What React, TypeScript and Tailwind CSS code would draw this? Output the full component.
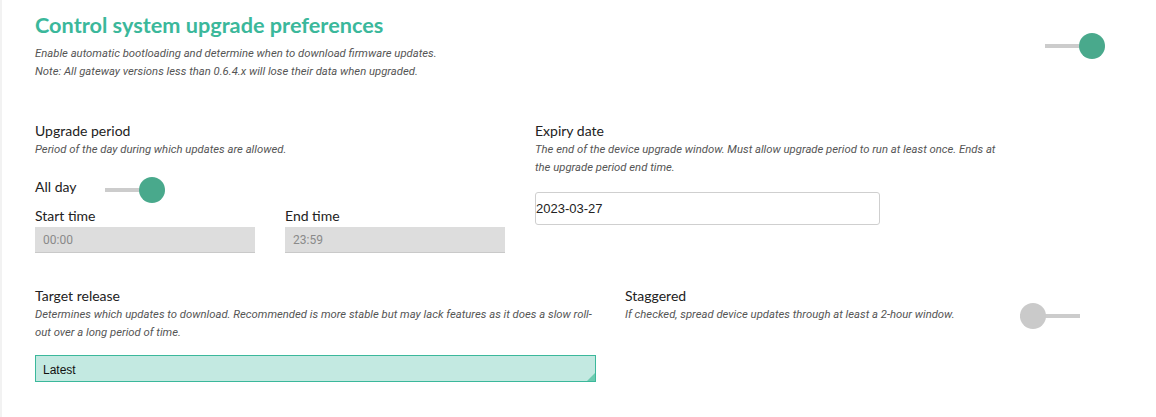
import React from 'react';

const Toggle = ({ on, track = 'w-[47px]' }: { on: boolean; track?: string }) => (
  <div className={`relative h-[26px] flex items-center ${track}`}>
    <div className="h-[4px] w-full bg-[#cccccc]" />
    <div
      className={`absolute top-0 h-[26px] w-[26px] rounded-full ${
        on ? 'right-0 bg-[#49a98c]' : 'left-0 bg-[#cacaca]'
      }`}
    />
  </div>
);

const Heading = ({ children }: { children: React.ReactNode }) => (
  <div className="text-[14px] leading-[20px] text-[#222] font-['Lato',sans-serif]">{children}</div>
);

const Desc = ({ children }: { children: React.ReactNode }) => (
  <p className="text-[11.3px] leading-[18px] italic text-[#555] font-['Roboto',sans-serif]">{children}</p>
);

export default function App() {
  return (
    <div className="flex min-h-[417px] w-[1156px] bg-white">
      <div className="w-[2px] shrink-0 bg-[#f2f2f2]" />
      <div className="flex-1 pl-[33px] pt-[10px]">
        {/* Header */}
        <div className="flex items-start justify-between pr-[51px]">
          <div>
            <h1 className="text-[21.7px] leading-[30px] font-bold text-[#3bb89b] font-['Lato',sans-serif]">
              Control system upgrade preferences
            </h1>
            <div className="mt-[5px]">
              <Desc>Enable automatic bootloading and determine when to download firmware updates.</Desc>
              <Desc>Note: All gateway versions less than 0.6.4.x will lose their data when upgraded.</Desc>
            </div>
          </div>
          <div className="mt-[23px]">
            <Toggle on track="w-[60px]" />
          </div>
        </div>

        {/* Period + expiry */}
        <div className="mt-[40px] flex">
          <div className="w-[500px]">
            <Heading>Upgrade period</Heading>
            <Desc>Period of the day during which updates are allowed.</Desc>
            <div className="mt-[10px] flex items-center">
              <span className="w-[70px] text-[14px] text-[#222] font-['Lato',sans-serif]">All day</span>
              <div className="mt-[8px]">
                <Toggle on track="w-[60px]" />
              </div>
            </div>
            <div className="mt-[3px] flex gap-[30px]">
              {[
                ['Start time', '00:00'],
                ['End time', '23:59'],
              ].map(([label, value]) => (
                <div key={label} className="w-[220px]">
                  <Heading>{label}</Heading>
                  <div className="mt-[1px] h-[26px] border-b border-[#c9c9c9] bg-[#dddddd] px-[8px] text-[12px] leading-[26px] text-[#8a8a8a] font-['Roboto',sans-serif]">
                    {value}
                  </div>
                </div>
              ))}
            </div>
          </div>
          <div className="w-[470px]">
            <Heading>Expiry date</Heading>
            <Desc>
              The end of the device upgrade window. Must allow upgrade period to run at least once. Ends at the
              upgrade period end time.
            </Desc>
            <div className="mt-[15px] h-[33px] w-[345px] rounded-[3px] border border-[#cfcfcf] pl-[0px] text-[13px] leading-[31px] text-[#222] font-['Liberation_Sans',sans-serif]">
              2023-03-27
            </div>
          </div>
        </div>

        {/* Target + staggered */}
        <div className="mt-[33px] flex">
          <div className="w-[590px]">
            <Heading>Target release</Heading>
            <div className="w-[565px]">
              <Desc>
                Determines which updates to download. Recommended is more stable but may lack features as it does a
                slow roll-out over a long period of time.
              </Desc>
            </div>
            <div className="relative mt-[13px] h-[27px] w-[561px] border border-[#3bb89b] bg-[#c3e9e1] pl-[7px] text-[12px] leading-[29px] text-[#111] font-['Liberation_Sans',sans-serif]">
              Latest
              <div className="absolute bottom-0 right-0 h-0 w-0 border-b-[8px] border-l-[8px] border-b-[#6ccbb0] border-l-transparent" />
            </div>
          </div>
          <div className="flex w-[455px] items-start justify-between">
            <div>
              <Heading>Staggered</Heading>
              <Desc>If checked, spread device updates through at least a 2-hour window.</Desc>
            </div>
            <div className="mt-[17px]">
              <Toggle on={false} track="w-[60px]" />
            </div>
          </div>
        </div>
      </div>
    </div>
  );
}
